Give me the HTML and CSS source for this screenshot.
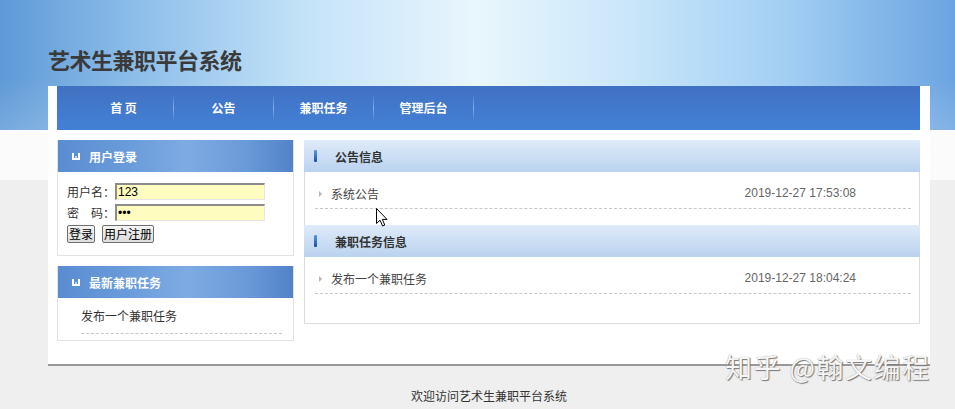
FILE: index.html
```html
<!DOCTYPE html>
<html lang="zh-CN">
<head>
<meta charset="utf-8">
<title>艺术生兼职平台系统</title>
<link rel="stylesheet" href="styles.css">
</head>
<body>
<div class="page">
  <h1 class="site-title">艺术生兼职平台系统</h1>
  <div class="container">
    <nav class="nav">
      <ul class="nav-list">
        <li class="nav-item">首 页</li>
        <li class="nav-item">公告</li>
        <li class="nav-item">兼职任务</li>
        <li class="nav-item">管理后台</li>
      </ul>
    </nav>
    <div class="main">
      <aside class="sidebar">
        <div class="side-box">
          <div class="side-head">
            <svg class="side-icon" width="8" height="7" viewBox="0 0 8 7"><path d="M1 0 V6 H7 V0" fill="none" stroke="#fff" stroke-width="2"/><rect x="3" y="3" width="2" height="2" fill="#fff" opacity="0.6"/></svg>
            <span>用户登录</span>
          </div>
          <form class="login-form">
            <div class="form-row"><label class="form-label">用户名：</label><input class="form-input" type="text" value="123"></div>
            <div class="form-row"><label class="form-label">密　码：</label><input class="form-input" type="password" value="123"></div>
            <div class="form-buttons"><button class="btn" type="button">登录</button><button class="btn" type="button">用户注册</button></div>
          </form>
        </div>
        <div class="side-box">
          <div class="side-head">
            <svg class="side-icon" width="8" height="7" viewBox="0 0 8 7"><path d="M1 0 V6 H7 V0" fill="none" stroke="#fff" stroke-width="2"/><rect x="3" y="3" width="2" height="2" fill="#fff" opacity="0.6"/></svg>
            <span>最新兼职任务</span>
          </div>
          <ul class="side-list">
            <li class="side-item">发布一个兼职任务</li>
          </ul>
        </div>
      </aside>
      <section class="content">
        <div class="sec-head"><span class="sec-bar"></span><span>公告信息</span></div>
        <ul class="news-list">
          <li class="news-item"><span class="news-title">系统公告</span><span class="news-date">2019-12-27 17:53:08</span></li>
        </ul>
        <div class="sec-head sec-head-2"><span class="sec-bar"></span><span>兼职任务信息</span></div>
        <ul class="news-list">
          <li class="news-item"><span class="news-title">发布一个兼职任务</span><span class="news-date">2019-12-27 18:04:24</span></li>
        </ul>
      </section>
    </div>
  </div>
  <div class="footer">欢迎访问艺术生兼职平台系统</div>
</div>
<div class="watermark">知乎 @翰文编程</div>
<svg class="cursor" width="12" height="19" viewBox="0 0 12 19"><path d="M0.5 0.5 V15.5 L4 12.2 L6.6 18 L8.8 17 L6.3 11.4 H11 Z" fill="#fff" stroke="#000" stroke-width="1" stroke-linejoin="round"/></svg>
</body>
</html>
```
FILE: styles.css
```css
html, body {
  margin: 0;
  padding: 0;
}
body {
  font-family: "Noto Sans CJK SC", "Liberation Sans", sans-serif;
  font-size: 12px;
  color: #333;
  min-height: 409px;
  position: relative;
  background:
    linear-gradient(to bottom, rgba(255,255,255,0) 0, rgba(255,255,255,0) 60%, rgba(255,255,255,0.15) 100%) top left / 100% 130px no-repeat,
    linear-gradient(to right, #5e9ad7 0%, #8cbde9 14%, #c4e3f8 32%, #e9f6fd 50%, #c9e6fa 66%, #a3cff3 82%, #6ba4e1 100%) top left / 100% 130px no-repeat,
    linear-gradient(to bottom, #fcfbfc 0, #fcfbfc 180px, #efefef 180px) #efefef;
}
.page {
  width: 882px;
  margin-left: 48px;
}
.site-title {
  margin: 0;
  padding-top: 46px;
  height: 26px;
  margin-bottom: 14px;
  font-size: 22px;
  line-height: 26px;
  font-weight: bold;
  color: #3a3a3a;
  letter-spacing: -0.5px;
}
.container {
  background: #fff;
  padding: 0 10px 23px 9px;
}
.nav {
  height: 44px;
  background: linear-gradient(to bottom, #4071c2, #4381d6);
}
.nav-list {
  list-style: none;
  margin: 0;
  padding: 0 0 0 17px;
  display: flex;
  height: 44px;
}
.nav-item {
  width: 99px;
  height: 44px;
  line-height: 43px;
  text-align: center;
  color: #fff;
  font-weight: bold;
  font-size: 12px;
  position: relative;
  border-right: 1px solid transparent;
  border-image: linear-gradient(to bottom, rgba(140,180,235,0) 20%, rgba(140,180,235,0.9) 50%, rgba(140,180,235,0) 80%) 1;
}
.main {
  display: flex;
  align-items: flex-start;
  gap: 10px;
  padding-top: 10px;
}
.sidebar {
  width: 237px;
  display: flex;
  flex-direction: column;
  gap: 10px;
}
.side-box {
  border: 1px solid #e2e2e2;
  border-top: 0;
}
.side-head {
  height: 32px;
  display: flex;
  align-items: center;
  padding-left: 14px;
  gap: 9px;
  color: #fff;
  font-weight: bold;
  font-size: 12px;
  background: linear-gradient(to right, #5a8cd2 0%, #6a9cdb 30%, #7eabe2 55%, #6b9ad9 80%, #5282c8 100%);
}
.side-icon {
  display: block;
}
.login-form {
  padding: 11px 0 12px 9px;
  margin: 0;
}
.form-row {
  display: flex;
  align-items: center;
  height: 17px;
  margin-bottom: 4px;
}
.form-label {
  width: 48px;
  color: #333;
  font-size: 12px;
}
.form-input {
  box-sizing: border-box;
  width: 150px;
  height: 17px;
  margin: 0;
  padding: 0 1px;
  background: #fffcc0;
  border-style: solid;
  border-width: 2px 1px 1px 2px;
  border-color: #8c8c8c #e6e6e6 #e6e6e6 #8c8c8c;
  font-family: "Liberation Sans", sans-serif;
  font-size: 12px;
  color: #000;
  outline: none;
}
.form-buttons {
  display: flex;
  gap: 7px;
  margin-top: 4px;
}
.btn {
  height: 18px;
  padding: 0 1px;
  margin: 0;
  font-family: "Noto Sans CJK SC", sans-serif;
  font-size: 12px;
  line-height: 14px;
  color: #000;
  background: linear-gradient(#f4f4f4, #dedede);
  border: 1px solid #707070;
  border-radius: 2px;
}
.side-list {
  list-style: none;
  margin: 0;
  padding: 0 11px 6px 23px;
}
.side-item {
  height: 35px;
  line-height: 35px;
  border-bottom: 1px dashed #c8c8c8;
  color: #333;
}
.content {
  flex: 1;
  border: 1px solid #dcdcdc;
  border-top: 0;
  padding-bottom: 29px;
}
.sec-head {
  height: 32px;
  display: flex;
  align-items: center;
  padding-left: 10px;
  gap: 18px;
  font-weight: bold;
  color: #333;
  background: linear-gradient(to bottom, #dfebf9, #bad2ef);
  margin: 0 -1px;
}
.sec-head-2 {
  margin-top: 16px;
}
.sec-bar {
  width: 3px;
  height: 12px;
  background: linear-gradient(to bottom, #5a9ae0, #1a4fa5);
  border-radius: 1px;
}
.news-list {
  list-style: none;
  margin: 0;
  padding: 0 8px 0 10px;
}
.news-item {
  display: flex;
  justify-content: space-between;
  padding-top: 7px;
  height: 29px;
  line-height: 29px;
  border-bottom: 1px dashed #c8c8c8;
}
.news-title {
  position: relative;
  padding-left: 16px;
  color: #444;
}
.news-title::before {
  content: "";
  position: absolute;
  left: 4px;
  top: 12px;
  border-left: 3px solid #b5b5b5;
  border-top: 3px solid transparent;
  border-bottom: 3px solid transparent;
}
.news-date {
  font-family: "Liberation Sans", sans-serif;
  color: #666;
  padding-right: 55px;
}
.footer {
  border-top: 2px solid #999;
  padding-top: 18px;
  height: 24px;
  line-height: 24px;
  text-align: center;
  color: #333;
  font-size: 12px;
}
.watermark {
  position: absolute;
  left: 725px;
  top: 349px;
  font-size: 27px;
  line-height: 36px;
  color: #f6f6f6;
  text-shadow: 1px 1px 1px #777, 0 0 1px #999;
  letter-spacing: 1.5px;
  white-space: nowrap;
}
.cursor {
  position: absolute;
  left: 376px;
  top: 208px;
}
```
